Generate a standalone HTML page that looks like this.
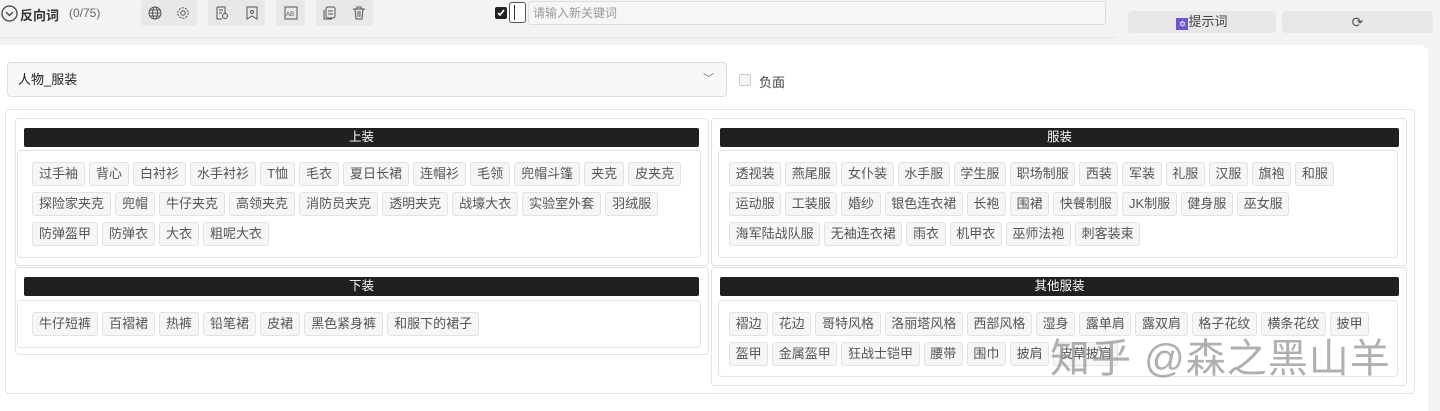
<!DOCTYPE html>
<html><head><meta charset="utf-8"><style>
*{box-sizing:border-box;margin:0;padding:0}
body{width:1440px;height:411px;overflow:hidden;background:#f4f2f2;font-family:"Liberation Sans","Noto Sans CJK SC",sans-serif;color:#333;position:relative}
.abs{position:absolute}
.ib{position:absolute;top:0;height:26px;background:#e9e7e7;border-radius:3px}
.ic{position:absolute;top:6px;width:14px;height:14px}
.main{position:absolute;left:0;top:45px;width:1428px;height:366px;background:#fff;border-radius:0 8px 0 0}
.sel{position:absolute;left:7px;top:62px;width:720px;height:35px;border:1px solid #ddd;border-radius:4px;background:#f8f8f8;font-size:13px;line-height:33px;padding-left:10px;color:#222}
.outer{position:absolute;left:5px;top:109px;width:1410px;height:285px;border:1px solid #e6e6e6;border-radius:4px}
.grp{position:absolute;border:1px solid #e3e3e3;border-radius:4px;background:#fff}
.hd{position:absolute;height:19px;background:#202020;color:#fff;font-size:12.5px;line-height:19px;text-align:center;border-radius:2px}
.box{position:absolute;border:1px solid #e3e3e3;border-radius:4px;padding:11px 0 0 14px;overflow:hidden}
.box.r{padding-left:10px}
.row{display:flex;gap:4px;margin-bottom:6px;white-space:nowrap}
.t{height:24px;line-height:22px;padding:0 6px;border:1px solid #e2e2e2;border-radius:3px;background:#f6f6f6;font-size:13px;color:#555;white-space:nowrap;flex:none}
.r .t{padding:0 5.6px}
</style></head><body>
<div class="abs" style="left:0;top:37px;width:1116px;height:1px;background:#e6e4e4"></div>
<svg class="abs" style="left:1px;top:5px" width="17" height="17" viewBox="0 0 17 17"><circle cx="8.5" cy="8.5" r="7.5" fill="none" stroke="#444" stroke-width="1.3"/><path d="M5 7l3.5 3.5L12 7" fill="none" stroke="#444" stroke-width="1.3"/></svg>
<div class="abs" style="left:20px;top:5px;font-size:13px;font-weight:bold;color:#333">反向词</div>
<div class="abs" style="left:69px;top:6px;font-size:12px;color:#666">(0/75)</div>
<div class="ib" style="left:141px;width:56px"></div>
<div class="ib" style="left:208px;width:57px"></div>
<div class="ib" style="left:276px;width:29px"></div>
<div class="ib" style="left:316px;width:57px"></div>
<svg class="ic" style="left:148px" viewBox="0 0 14 14"><circle cx="7" cy="7" r="6" fill="none" stroke="#555"/><ellipse cx="7" cy="7" rx="2.5" ry="6" fill="none" stroke="#555"/><path d="M1 7h12M2 4h10M2 10h10" stroke="#555" fill="none"/></svg>
<svg class="ic" style="left:176px" viewBox="0 0 14 14"><circle cx="7" cy="7" r="2.2" fill="none" stroke="#555"/><circle cx="7" cy="7" r="5.2" fill="none" stroke="#555" stroke-dasharray="2 1.3"/></svg>
<svg class="ic" style="left:215px" viewBox="0 0 14 14"><path d="M2 1h8v6M2 1v12h5M4 4h4M4 7h3" fill="none" stroke="#555"/><circle cx="10" cy="10" r="2.5" fill="none" stroke="#555"/></svg>
<svg class="ic" style="left:245px" viewBox="0 0 14 14"><path d="M2 1h10v12l-5-3-5 3z" fill="none" stroke="#555"/><circle cx="7" cy="6" r="1.5" fill="none" stroke="#555"/></svg>
<svg class="ic" style="left:284px" viewBox="0 0 14 14"><rect x="1" y="1" width="12" height="12" fill="none" stroke="#555"/><text x="2" y="10" font-size="6" fill="#555" font-family="Liberation Sans">AB</text></svg>
<svg class="ic" style="left:323px" viewBox="0 0 14 14"><rect x="3" y="1" width="9" height="11" rx="2" fill="none" stroke="#555"/><path d="M1 4v9h8M5 5h5M5 8h5" fill="none" stroke="#555"/></svg>
<svg class="ic" style="left:352px" viewBox="0 0 14 14"><path d="M1 3h12M5 3V1h4v2M3 3l1 10h6l1-10M6 5v6M8 5v6" fill="none" stroke="#555"/></svg>
<div class="abs" style="left:495px;top:7px;width:12px;height:12px;background:#222;border-radius:2px"></div>
<svg class="abs" style="left:496px;top:8px" width="10" height="10"><path d="M2 5l2 2 4-5" stroke="#fff" stroke-width="1.6" fill="none"/></svg>
<div class="abs" style="left:509px;top:2px;width:17px;height:21px;border:1px solid #555;border-radius:3px;background:#fff"></div>
<div class="abs" style="left:514px;top:5px;width:1px;height:15px;background:#333"></div>
<div class="abs" style="left:528px;top:1px;width:578px;height:24px;border:1px solid #ddd;border-radius:3px;background:#f7f6f6;font-size:12px;color:#999;line-height:22px;padding-left:4px">请输入新关键词</div>
<div class="abs" style="left:1128px;top:11px;width:148px;height:22px;background:#e8e6e6;border-radius:4px;font-size:13px;color:#444;line-height:22px;text-align:center"><span style="display:inline-block;width:12px;height:12px;background:#6b55c8;vertical-align:-1px;color:#fff;font-size:9px;line-height:12px">✡</span>提示词</div>
<div class="abs" style="left:1282px;top:11px;width:151px;height:22px;background:#e8e6e6;border-radius:4px;font-size:14px;color:#555;line-height:22px;text-align:center">⟳</div>
<div class="main"></div>
<div class="sel">人物_服装<span style="position:absolute;right:12px;top:0;color:#777;font-size:11px">﹀</span></div>
<div class="abs" style="left:739px;top:74px;width:12px;height:12px;border:1px solid #ccc;border-radius:2px;background:#f5f5f5"></div>
<div class="abs" style="left:759px;top:72px;font-size:13px;color:#444">负面</div>
<div class="outer"></div>

<div class="grp" style="left:15px;top:118px;width:694px;height:148px"></div>
<div class="hd" style="left:24px;top:128px;width:675px">上装</div>
<div class="box" style="left:17px;top:150px;width:684px;height:108px">
<div class="row"><span class="t">过手袖</span><span class="t">背心</span><span class="t">白衬衫</span><span class="t">水手衬衫</span><span class="t">T恤</span><span class="t">毛衣</span><span class="t">夏日长裙</span><span class="t">连帽衫</span><span class="t">毛领</span><span class="t">兜帽斗篷</span><span class="t">夹克</span><span class="t">皮夹克</span></div>
<div class="row"><span class="t">探险家夹克</span><span class="t">兜帽</span><span class="t">牛仔夹克</span><span class="t">高领夹克</span><span class="t">消防员夹克</span><span class="t">透明夹克</span><span class="t">战壕大衣</span><span class="t">实验室外套</span><span class="t">羽绒服</span></div>
<div class="row"><span class="t">防弹盔甲</span><span class="t">防弹衣</span><span class="t">大衣</span><span class="t">粗呢大衣</span></div>
</div>

<div class="grp" style="left:15px;top:267px;width:694px;height:88px"></div>
<div class="hd" style="left:24px;top:277px;width:675px">下装</div>
<div class="box" style="left:17px;top:300px;width:684px;height:48px">
<div class="row"><span class="t">牛仔短裤</span><span class="t">百褶裙</span><span class="t">热裤</span><span class="t">铅笔裙</span><span class="t">皮裙</span><span class="t">黑色紧身裤</span><span class="t">和服下的裙子</span></div>
</div>

<div class="grp" style="left:711px;top:118px;width:696px;height:148px"></div>
<div class="hd" style="left:720px;top:128px;width:679px">服装</div>
<div class="box r" style="left:718px;top:150px;width:680px;height:108px">
<div class="row"><span class="t">透视装</span><span class="t">燕尾服</span><span class="t">女仆装</span><span class="t">水手服</span><span class="t">学生服</span><span class="t">职场制服</span><span class="t">西装</span><span class="t">军装</span><span class="t">礼服</span><span class="t">汉服</span><span class="t">旗袍</span><span class="t">和服</span></div>
<div class="row"><span class="t">运动服</span><span class="t">工装服</span><span class="t">婚纱</span><span class="t">银色连衣裙</span><span class="t">长袍</span><span class="t">围裙</span><span class="t">快餐制服</span><span class="t">JK制服</span><span class="t">健身服</span><span class="t">巫女服</span></div>
<div class="row"><span class="t">海军陆战队服</span><span class="t">无袖连衣裙</span><span class="t">雨衣</span><span class="t">机甲衣</span><span class="t">巫师法袍</span><span class="t">刺客装束</span></div>
</div>

<div class="grp" style="left:711px;top:267px;width:696px;height:119px"></div>
<div class="hd" style="left:720px;top:277px;width:679px">其他服装</div>
<div class="box r" style="left:718px;top:300px;width:680px;height:77px">
<div class="row"><span class="t">褶边</span><span class="t">花边</span><span class="t">哥特风格</span><span class="t">洛丽塔风格</span><span class="t">西部风格</span><span class="t">湿身</span><span class="t">露单肩</span><span class="t">露双肩</span><span class="t">格子花纹</span><span class="t">横条花纹</span><span class="t">披甲</span></div>
<div class="row"><span class="t">盔甲</span><span class="t">金属盔甲</span><span class="t">狂战士铠甲</span><span class="t">腰带</span><span class="t">围巾</span><span class="t">披肩</span><span class="t">皮草披肩</span></div>
</div>
<div class="abs" style="left:1050px;top:326px;font-size:40px;color:rgba(150,150,150,0.75);white-space:nowrap;letter-spacing:1px">知乎 @森之黑山羊</div>
</body></html>
